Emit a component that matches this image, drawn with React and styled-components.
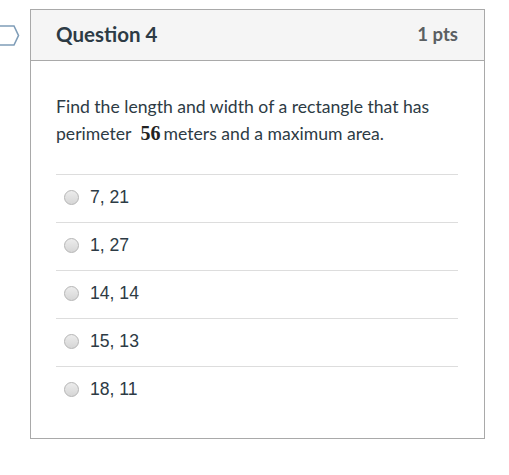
import styled, { createGlobalStyle } from "styled-components";

const GlobalStyle = createGlobalStyle`
  body {
    margin: 0;
    background: #fff;
    font-family: Lato, "Open Sans", sans-serif;
    color: #2d3b45;
  }
`;

const answers = ["7, 21", "1, 27", "14, 14", "15, 13", "18, 11"];

const App = () => {
  return (
    <Page>
      <GlobalStyle />
      <Flag width="20" height="21" viewBox="0 0 20 21">
        <path d="M-2 1 H14 L18.5 10.5 L14 20 H-2" fill="none" stroke="#7f9db8" strokeWidth="1.6" />
      </Flag>
      <Card>
        <Header>
          <Title>Question 4</Title>
          <Points>1 pts</Points>
        </Header>
        <Body>
          <Prompt>
            Find the length and width of a rectangle that has perimeter{" "}
            <MathNum>56</MathNum>meters and a maximum area.
          </Prompt>
          <Answers>
            {answers.map((a) => (
              <Answer key={a}>
                <Radio />
                <AnswerText>{a}</AnswerText>
              </Answer>
            ))}
          </Answers>
        </Body>
      </Card>
    </Page>
  );
};

const Page = styled.div`
  position: relative;
  padding: 9px 0 0 30px;
`;

const Flag = styled.svg`
  position: absolute;
  left: 0;
  top: 25px;
`;

const Card = styled.div`
  width: 453px;
  border: 1px solid #a9a9a9;
  background: #fff;
`;

const Header = styled.div`
  height: 51px;
  box-sizing: border-box;
  padding: 0 26px 2px 25px;
  display: flex;
  align-items: center;
  justify-content: space-between;
  background: #f5f5f5;
  border-bottom: 1px solid #a9a9a9;
`;

const Title = styled.h2`
  margin: 0;
  font-size: 20.5px;
  font-weight: 700;
  color: #2d3b45;
`;

const Points = styled.span`
  font-size: 18.6px;
  font-weight: 700;
  color: #5b5f62;
`;

const Body = styled.div`
  padding: 33px 26px 24px 25px;
`;

const Prompt = styled.p`
  margin: 0 0 27px;
  font-size: 17.6px;
  line-height: 26.7px;
`;

const MathNum = styled.span`
  font-family: "Liberation Serif", "DejaVu Serif", serif;
  font-weight: 700;
  font-size: 20px;
  line-height: 1;
  margin: 0 3px 0 5px;
  color: #222;
`;

const Answers = styled.div``;

const Answer = styled.div`
  display: flex;
  align-items: center;
  height: 47px;
  padding-left: 8px;
  border-top: 1px solid #ddd;
`;

const Radio = styled.span`
  width: 13px;
  height: 13px;
  border-radius: 50%;
  border: 1px solid #b5b5b5;
  background: linear-gradient(#ececec, #d6d6d6);
  margin-right: 11px;
  margin-top: -2px;
`;

const AnswerText = styled.span`
  font-family: "Liberation Sans", Arial, sans-serif;
  font-size: 17.6px;
  color: #2d3b45;
  margin-top: -3px;
`;

export default App;
